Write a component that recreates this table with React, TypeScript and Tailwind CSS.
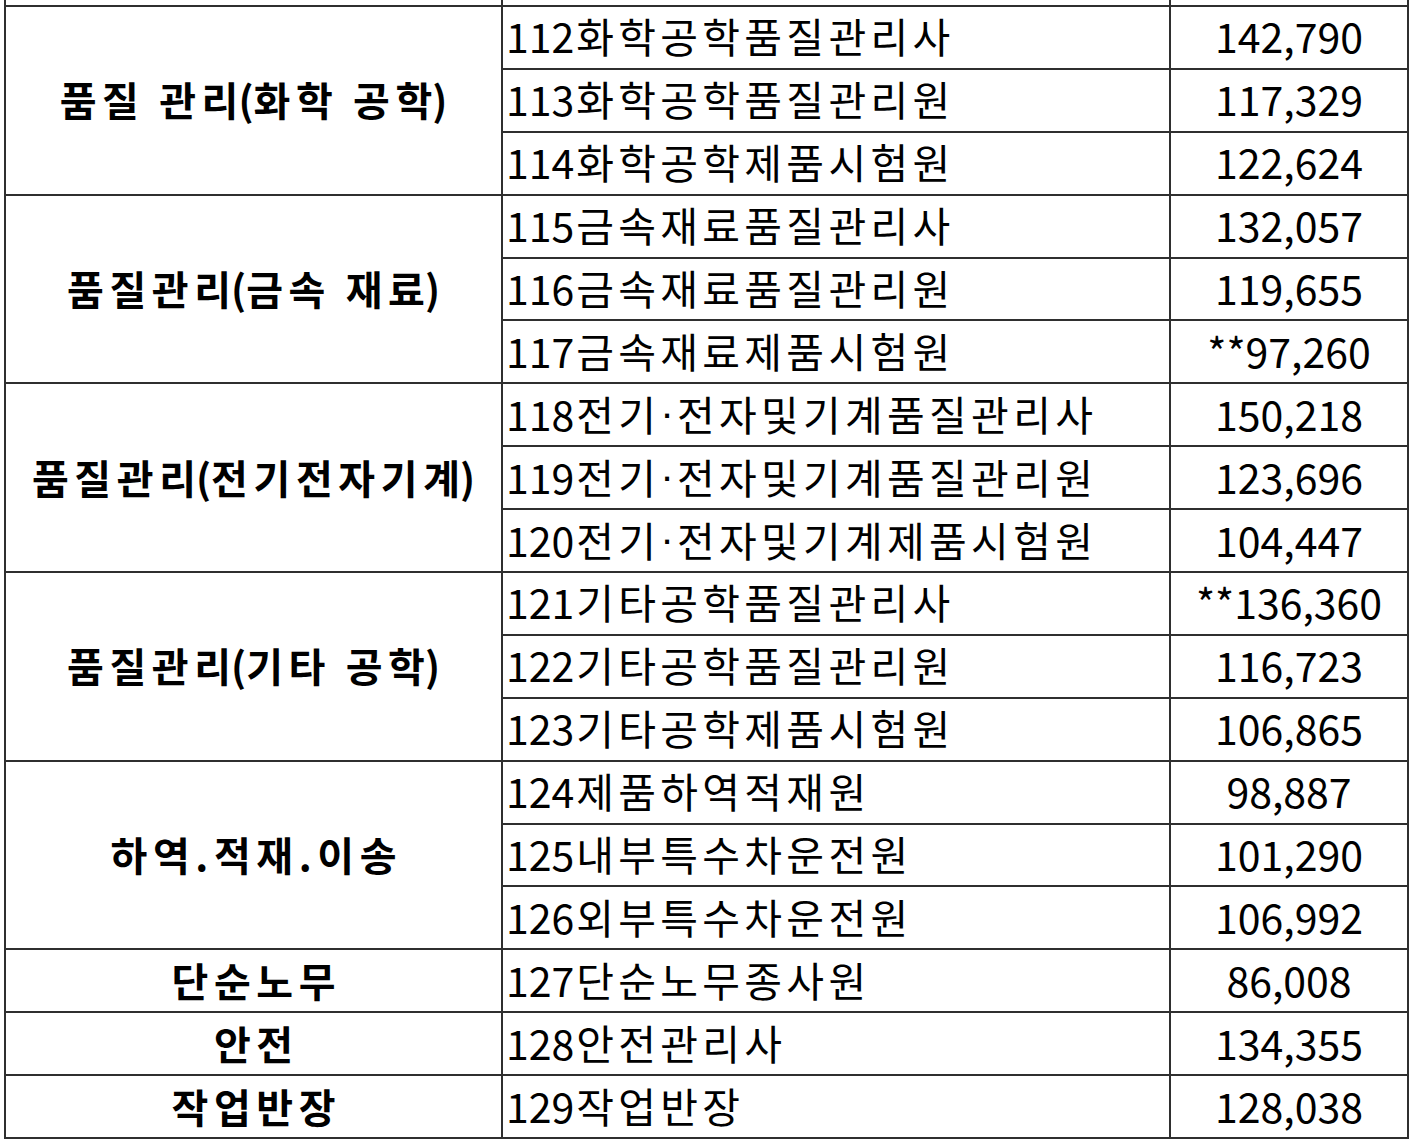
const groups: { label: string; rows: [string, string][] }[] = [
  {
    label: "품질 관리(화학 공학)",
    rows: [
      ["112화학공학품질관리사", "142,790"],
      ["113화학공학품질관리원", "117,329"],
      ["114화학공학제품시험원", "122,624"],
    ],
  },
  {
    label: "품질관리(금속 재료)",
    rows: [
      ["115금속재료품질관리사", "132,057"],
      ["116금속재료품질관리원", "119,655"],
      ["117금속재료제품시험원", "**97,260"],
    ],
  },
  {
    label: "품질관리(전기전자기계)",
    rows: [
      ["118전기·전자및기계품질관리사", "150,218"],
      ["119전기·전자및기계품질관리원", "123,696"],
      ["120전기·전자및기계제품시험원", "104,447"],
    ],
  },
  {
    label: "품질관리(기타 공학)",
    rows: [
      ["121기타공학품질관리사", "**136,360"],
      ["122기타공학품질관리원", "116,723"],
      ["123기타공학제품시험원", "106,865"],
    ],
  },
  {
    label: "하역.적재.이송",
    rows: [
      ["124제품하역적재원", "98,887"],
      ["125내부특수차운전원", "101,290"],
      ["126외부특수차운전원", "106,992"],
    ],
  },
  { label: "단순노무", rows: [["127단순노무종사원", "86,008"]] },
  { label: "안전", rows: [["128안전관리사", "134,355"]] },
  { label: "작업반장", rows: [["129작업반장", "128,038"]] },
];

const spanClass: Record<number, string> = {
  1: "row-span-1",
  3: "row-span-3",
};

const cell = "border-r-2 border-b-2 border-[#2f2f2f]";

// code number, then the Korean name (the middle dot is narrow in the source)
function JobName({ name }: { name: string }) {
  const code = name.slice(0, 3);
  const parts = name.slice(3).split("·");
  return (
    <>
      <span className="mr-[2px]">{code}</span>
      {parts.map((p, i) => (
        <span key={i} className="flex">
          {i > 0 && (
            <span className="font-['Liberation_Sans'] mr-[3px]">·</span>
          )}
          <span className="tracking-[4.3px]">{p}</span>
        </span>
      ))}
    </>
  );
}

// group label: hangul is spaced out, brackets sit tight
function GroupLabel({ text }: { text: string }) {
  const chars = Array.from(text);
  return (
    <>
      {chars.map((c, i) => {
        const next = chars[i + 1];
        const tight =
          c === "(" || c === ")" || next === undefined || next === "(" || next === ")";
        return (
          <span key={i} className={tight ? "" : "mr-[5.6px]"}>
            {c}
          </span>
        );
      })}
    </>
  );
}

export default function App() {
  return (
    <div
      className="bg-white w-[1413px] h-[1145px] overflow-hidden text-black"
      style={{ fontFamily: '"Noto Sans CJK KR", "Noto Sans", sans-serif' }}
    >
      <div className="ml-[4px] w-[1405px] border-l-2 border-[#2f2f2f] grid grid-cols-[497px_668px_238px] grid-rows-[7px_repeat(18,62.9px)]">
        <div className={cell} />
        <div className={cell} />
        <div className={cell} />
        {groups.map((g) => (
          <>
            <div
              key={g.label}
              className={`${cell} ${spanClass[g.rows.length]} flex items-center justify-center pb-[2px] text-[40px] font-bold leading-none whitespace-pre`}
            >
              <GroupLabel text={g.label} />
            </div>
            {g.rows.map(([name, value], i) => (
              <>
                <div
                  key={name}
                  className={`${cell} col-start-2 flex items-center pl-[3px] pb-[3px] text-[41px] leading-none whitespace-nowrap`}
                >
                  <JobName name={name} />
                </div>
                <div
                  key={name + i}
                  className={`${cell} flex items-center justify-center pb-[3px] text-[41px] leading-none`}
                >
                  {value}
                </div>
              </>
            ))}
          </>
        ))}
      </div>
    </div>
  );
}
